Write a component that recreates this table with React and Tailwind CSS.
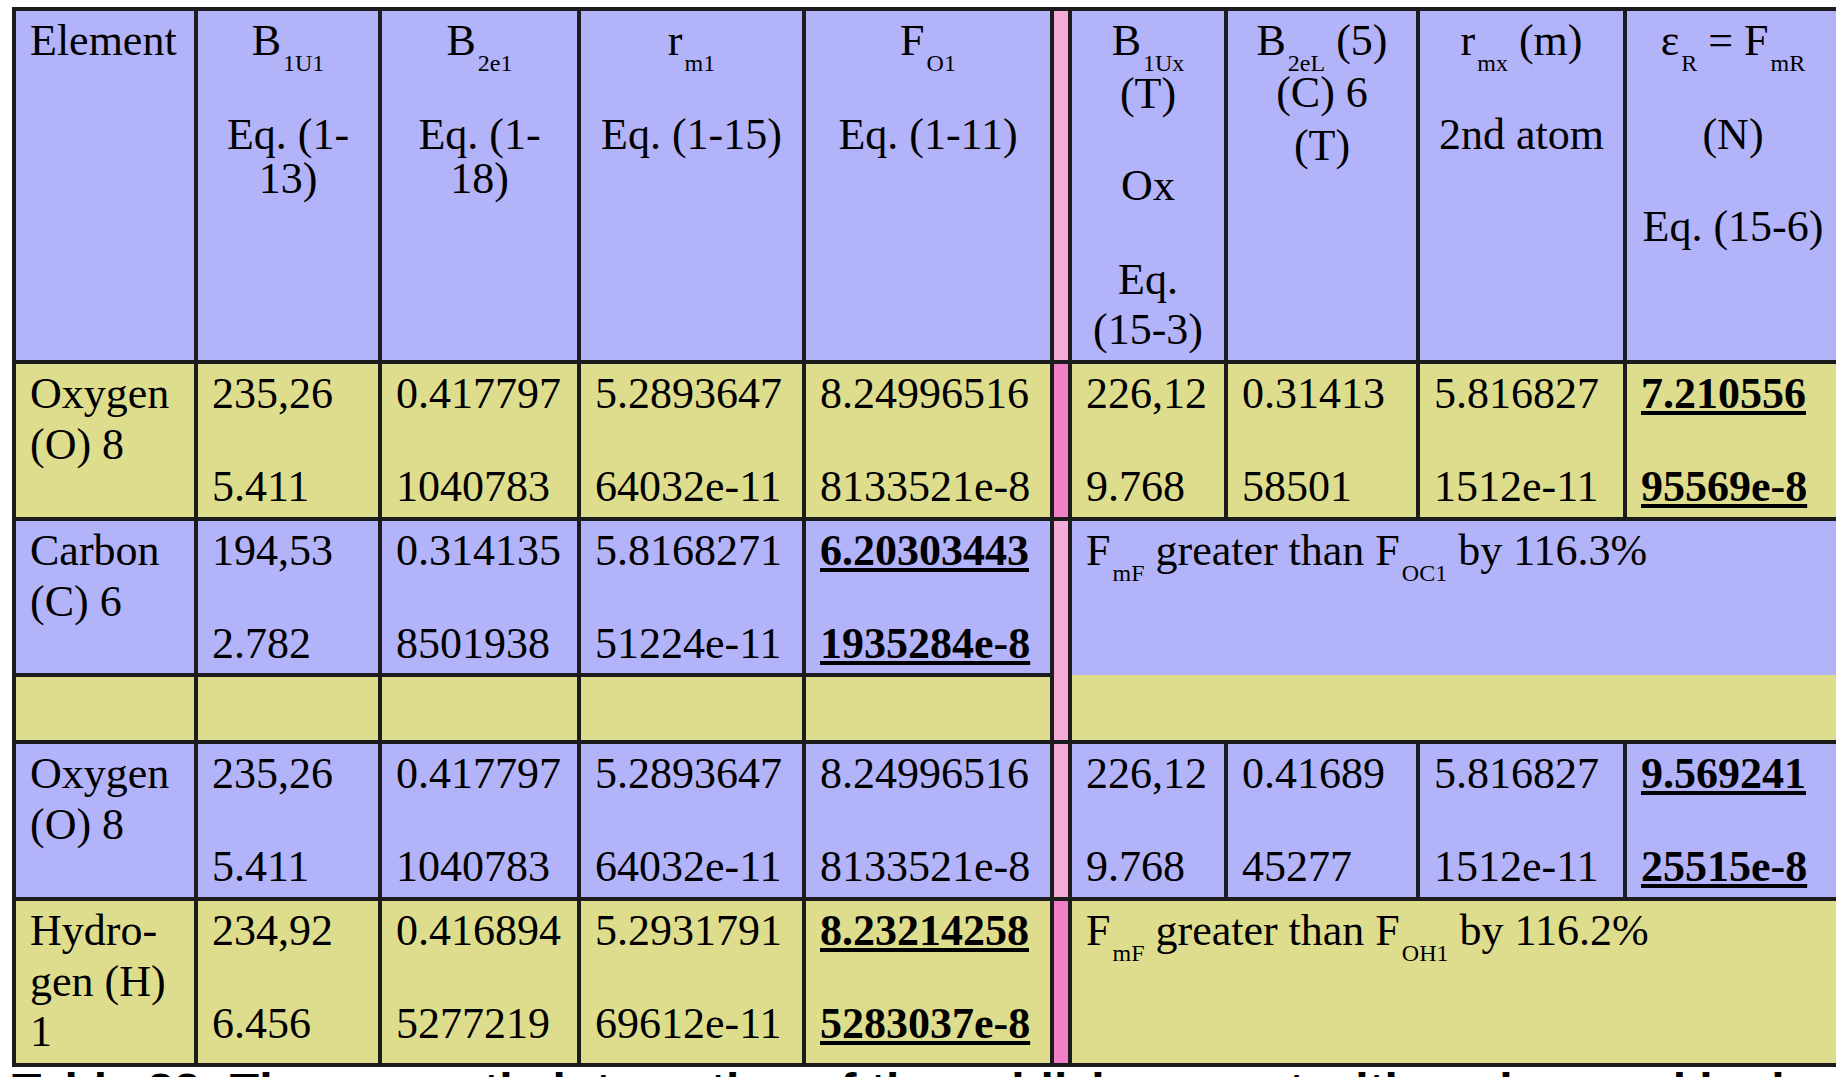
import React from "react";

const BLUE = "bg-[#b3b3fa]";
const YELLOW = "bg-[#dedd8e]";
const PINK = "bg-[#f6aad8]";
const PINK_DARK = "bg-[#f17fc8]";

// subscript that does not stretch the line box
function Sub({ children }) {
  return <span className="ml-[2px] text-[24px] leading-[0] align-[-16px]">{children}</span>;
}

function Line({ gap = "", children }) {
  return <div className={`whitespace-nowrap leading-[50px] ${gap}`}>{children}</div>;
}

function Cell({ bg, h = "", span, rowSpan, center, extra = "", children }) {
  return (
    <td
      colSpan={span}
      rowSpan={rowSpan}
      className={`border-4 border-[#1c1c1c] p-0 align-top ${bg} ${h} ${extra}`}
    >
      <div className={`px-[14px] pt-[5px] ${center ? "text-center" : "text-left"}`}>{children}</div>
    </td>
  );
}

function Num({ bg, h, v }) {
  const [a, b, bold] = v;
  const cls = bold ? "font-bold underline decoration-[4px] underline-offset-[3px]" : "";
  return (
    <Cell bg={bg} h={h}>
      <Line><span className={cls}>{a}</span></Line>
      <Line gap="mt-[43px]"><span className={cls}>{b}</span></Line>
    </Cell>
  );
}

function Name({ bg, h, lines }) {
  return (
    <Cell bg={bg} h={h}>
      {lines.map((t, i) => (
        <Line key={i} gap={i === 1 ? "mt-[1px]" : ""}>{t}</Line>
      ))}
    </Cell>
  );
}

function Note({ bg, h, extra, label, pct }) {
  return (
    <Cell bg={bg} h={h} span={4} extra={extra}>
      <Line>
        F<Sub>mF</Sub> greater than F<Sub>{label}</Sub> by {pct}
      </Line>
    </Cell>
  );
}

export default function App() {
  const hh = "h-[353px]";

  return (
    <div className="h-[1077px] w-[1836px] overflow-hidden bg-white font-['Liberation_Serif','Times_New_Roman',serif] text-[44px] text-black">
      <table className="ml-[12px] mt-[7px] w-[1827px] table-fixed border-collapse">
        <colgroup>
          <col className="w-[182px]" />
          <col className="w-[184px]" />
          <col className="w-[199px]" />
          <col className="w-[225px]" />
          <col className="w-[248px]" />
          <col className="w-[18px]" />
          <col className="w-[156px]" />
          <col className="w-[192px]" />
          <col className="w-[207px]" />
          <col className="w-[216px]" />
        </colgroup>
        <tbody>
          {/* header */}
          <tr>
            <Cell bg={BLUE} h={hh}>
              <Line>Element</Line>
            </Cell>
            <Cell bg={BLUE} h={hh} center>
              <Line>B<Sub>1U1</Sub></Line>
              <Line gap="mt-[44px]">Eq. (1-</Line>
              <Line gap="mt-[-6px]">13)</Line>
            </Cell>
            <Cell bg={BLUE} h={hh} center>
              <Line>B<Sub>2e1</Sub></Line>
              <Line gap="mt-[44px]">Eq. (1-</Line>
              <Line gap="mt-[-6px]">18)</Line>
            </Cell>
            <Cell bg={BLUE} h={hh} center>
              <Line>r<Sub>m1</Sub></Line>
              <Line gap="mt-[44px]">Eq. (1-15)</Line>
            </Cell>
            <Cell bg={BLUE} h={hh} center>
              <Line>F<Sub>O1</Sub></Line>
              <Line gap="mt-[44px]">Eq. (1-11)</Line>
            </Cell>
            <Cell bg={PINK} h={hh} />
            <Cell bg={BLUE} h={hh} center>
              <Line>B<Sub>1Ux</Sub></Line>
              <Line gap="mt-[3px]">(T)</Line>
              <Line gap="mt-[42px]">Ox</Line>
              <Line gap="mt-[44px]">Eq.</Line>
              <Line>(15-3)</Line>
            </Cell>
            <Cell bg={BLUE} h={hh} center>
              <Line>B<Sub>2eL</Sub> (5)</Line>
              <Line gap="mt-[2px]">(C) 6</Line>
              <Line gap="mt-[3px]">(T)</Line>
            </Cell>
            <Cell bg={BLUE} h={hh} center>
              <Line>r<Sub>mx</Sub> (m)</Line>
              <Line gap="mt-[44px]">2nd atom</Line>
            </Cell>
            <Cell bg={BLUE} h={hh} center>
              <Line>ε<Sub>R</Sub> = F<Sub>mR</Sub></Line>
              <Line gap="mt-[44px]">(N)</Line>
              <Line gap="mt-[42px]">Eq. (15-6)</Line>
            </Cell>
          </tr>

          {/* oxygen / carbon pair */}
          <tr>
            <Name bg={YELLOW} h="h-[157px]" lines={["Oxygen", "(O) 8"]} />
            <Num bg={YELLOW} h="h-[157px]" v={["235,26", "5.411"]} />
            <Num bg={YELLOW} h="h-[157px]" v={["0.417797", "1040783"]} />
            <Num bg={YELLOW} h="h-[157px]" v={["5.2893647", "64032e-11"]} />
            <Num bg={YELLOW} h="h-[157px]" v={["8.24996516", "8133521e-8"]} />
            <Cell bg={PINK_DARK} h="h-[157px]" />
            <Num bg={YELLOW} h="h-[157px]" v={["226,12", "9.768"]} />
            <Num bg={YELLOW} h="h-[157px]" v={["0.31413", "58501"]} />
            <Num bg={YELLOW} h="h-[157px]" v={["5.816827", "1512e-11"]} />
            <Num bg={YELLOW} h="h-[157px]" v={["7.210556", "95569e-8", true]} />
          </tr>
          <tr>
            <Name bg={BLUE} h="h-[156px]" lines={["Carbon", "(C) 6"]} />
            <Num bg={BLUE} h="h-[156px]" v={["194,53", "2.782"]} />
            <Num bg={BLUE} h="h-[156px]" v={["0.314135", "8501938"]} />
            <Num bg={BLUE} h="h-[156px]" v={["5.8168271", "51224e-11"]} />
            <Num bg={BLUE} h="h-[156px]" v={["6.20303443", "1935284e-8", true]} />
            <Cell bg={PINK} rowSpan={2} />
            <Note bg={BLUE} h="h-[156px]" extra="border-b-0" label="OC1" pct="116.3%" />
          </tr>
          <tr>
            <Cell bg={YELLOW} h="h-[67px]" />
            <Cell bg={YELLOW} h="h-[67px]" />
            <Cell bg={YELLOW} h="h-[67px]" />
            <Cell bg={YELLOW} h="h-[67px]" />
            <Cell bg={YELLOW} h="h-[67px]" />
            <Cell bg={YELLOW} h="h-[67px]" span={4} extra="border-t-0" />
          </tr>

          {/* oxygen / hydrogen pair */}
          <tr>
            <Name bg={BLUE} h="h-[157px]" lines={["Oxygen", "(O) 8"]} />
            <Num bg={BLUE} h="h-[157px]" v={["235,26", "5.411"]} />
            <Num bg={BLUE} h="h-[157px]" v={["0.417797", "1040783"]} />
            <Num bg={BLUE} h="h-[157px]" v={["5.2893647", "64032e-11"]} />
            <Num bg={BLUE} h="h-[157px]" v={["8.24996516", "8133521e-8"]} />
            <Cell bg={PINK} h="h-[157px]" />
            <Num bg={BLUE} h="h-[157px]" v={["226,12", "9.768"]} />
            <Num bg={BLUE} h="h-[157px]" v={["0.41689", "45277"]} />
            <Num bg={BLUE} h="h-[157px]" v={["5.816827", "1512e-11"]} />
            <Num bg={BLUE} h="h-[157px]" v={["9.569241", "25515e-8", true]} />
          </tr>
          <tr>
            <Name bg={YELLOW} h="h-[166px]" lines={["Hydro-", "gen (H)", "1"]} />
            <Num bg={YELLOW} h="h-[166px]" v={["234,92", "6.456"]} />
            <Num bg={YELLOW} h="h-[166px]" v={["0.416894", "5277219"]} />
            <Num bg={YELLOW} h="h-[166px]" v={["5.2931791", "69612e-11"]} />
            <Num bg={YELLOW} h="h-[166px]" v={["8.23214258", "5283037e-8", true]} />
            <Cell bg={PINK_DARK} h="h-[166px]" />
            <Note bg={YELLOW} h="h-[166px]" label="OH1" pct="116.2%" />
          </tr>
        </tbody>
      </table>
      <p className="ml-[12px] mt-[4px] whitespace-nowrap font-['Liberation_Sans',Arial,sans-serif] text-[48px] font-bold leading-[40px]">
        Table 32: The magnetic interaction of the oxidizing agent with carbon and hydrogen
      </p>
    </div>
  );
}
